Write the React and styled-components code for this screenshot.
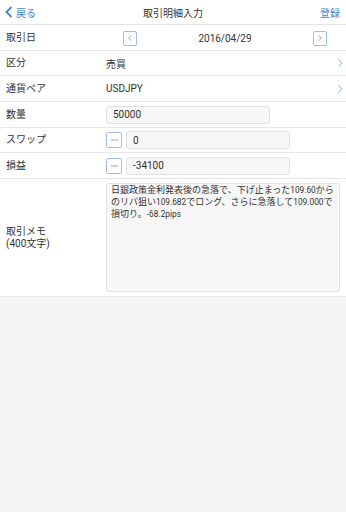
import React from "react";
import styled, { createGlobalStyle } from "styled-components";

const Global = createGlobalStyle`
  html, body { margin: 0; padding: 0; background: #f5f5f5; }
  body { font-family: Roboto, "Noto Sans CJK JP", sans-serif; color: #333; }
  * { box-sizing: border-box; }
`;

const Page = styled.div`
  width: 346px;
  height: 512px;
  background: #f5f5f5;
  font-size: 10px;
`;

const Header = styled.div`
  height: 25px;
  background: #fff;
  border-bottom: 1px solid #e3e3e3;
  display: grid;
  grid-template-columns: 1fr auto 1fr;
  align-items: center;
  padding: 0 6px 0 5px;
`;

const NavLink = styled.div`
  color: #3f86d6;
  font-size: 10px;
  display: flex;
  align-items: center;
  gap: 3px;
  justify-self: ${(p) => (p.$right ? "end" : "start")};
`;

const Title = styled.div`
  font-size: 10px;
  color: #333;
  padding-left: 1px;
`;

const Form = styled.div`
  background: #fff;
`;

const Row = styled.div`
  height: ${(p) => p.$h}px;
  border-bottom: 1px solid #e8e8e8;
  display: grid;
  grid-template-columns: 100px 1fr;
  align-items: center;
  padding-left: 6px;
  position: relative;
`;

const Label = styled.div`
  font-size: 10px;
  color: #333;
  line-height: 12px;
`;

const Value = styled.div`
  font-size: 10px;
  color: #333;
  display: flex;
  align-items: center;
`;

const DateBox = styled.div`
  display: grid;
  grid-template-columns: 14px 1fr 14px;
  align-items: center;
  padding-left: 17px;
  padding-right: 19px;
  margin-top: 1px;
`;

const DateText = styled.div`
  text-align: center;
  font-size: 10px;
  color: #333;
`;

const SmallBtn = styled.div`
  width: ${(p) => p.$w || 14}px;
  height: ${(p) => p.$hh || 15}px;
  border: 1px solid #9dbfee;
  border-radius: 2px;
  display: flex;
  align-items: center;
  justify-content: center;
  background: #fff;
`;

const Chevron = styled.div`
  position: absolute;
  right: 3px;
  top: 50%;
  transform: translateY(-50%);
  display: flex;
`;

const Input = styled.div`
  width: ${(p) => p.$w}px;
  height: 18px;
  background: #f7f7f7;
  border: 1px solid #e2e2e2;
  border-radius: 3px;
  padding-left: 6px;
  font-size: 10px;
  color: #333;
  display: flex;
  align-items: center;
`;

const InputGroup = styled.div`
  display: flex;
  align-items: center;
  gap: 4px;
`;

const MemoRow = styled.div`
  height: 118px;
  border-bottom: 1px solid #e8e8e8;
  display: grid;
  grid-template-columns: 100px 1fr;
  align-items: center;
  padding-left: 6px;
`;

const TextArea = styled.div`
  width: 234px;
  height: 109px;
  background: #f7f7f7;
  border: 1px solid #e2e2e2;
  border-radius: 3px;
  padding: 0 3px 0 4px;
  font-size: 9px;
  line-height: 12px;
  color: #333;
  word-break: break-all;
`;

const Num = styled.span`
  font-size: 8.3px;
`;

const Chev = ({ dir = "right", size = 6, color = "#3f86d6", w = 1.2 }) => (
  <svg width={size} height={size * 1.6} viewBox="0 0 6 10">
    <path
      d={dir === "right" ? "M1 1 L5 5 L1 9" : "M5 1 L1 5 L5 9"}
      fill="none"
      stroke={color}
      strokeWidth={w}
    />
  </svg>
);

const Minus = () => (
  <svg width="7" height="2" viewBox="0 0 7 2">
    <rect x="0" y="0.5" width="7" height="1" fill="#7aaae8" />
  </svg>
);

export default function App() {
  return (
    <Page>
      <Global />
      <Header>
        <NavLink>
          <svg width="8" height="12" viewBox="0 0 8 12">
            <path d="M6.5 1 L1.5 6 L6.5 11" fill="none" stroke="#3f86d6" strokeWidth="1.8" />
          </svg>
          戻る
        </NavLink>
        <Title>取引明細入力</Title>
        <NavLink $right>登録</NavLink>
      </Header>
      <Form>
        <Row $h={26}>
          <Label>取引日</Label>
          <DateBox>
            <SmallBtn>
              <Chev dir="left" size={4} w={1.1} />
            </SmallBtn>
            <DateText>2016/04/29</DateText>
            <SmallBtn>
              <Chev dir="right" size={4} w={1.1} />
            </SmallBtn>
          </DateBox>
        </Row>
        <Row $h={25}>
          <Label>区分</Label>
          <Value>売買</Value>
          <Chevron>
            <Chev size={6} color="#8db4ea" w={1} />
          </Chevron>
        </Row>
        <Row $h={26}>
          <Label>通貨ペア</Label>
          <Value>USDJPY</Value>
          <Chevron>
            <Chev size={6} color="#8db4ea" w={1} />
          </Chevron>
        </Row>
        <Row $h={26}>
          <Label>数量</Label>
          <Value>
            <Input $w={164}>50000</Input>
          </Value>
        </Row>
        <Row $h={25}>
          <Label>スワップ</Label>
          <InputGroup>
            <SmallBtn $w={16} $hh={16}>
              <Minus />
            </SmallBtn>
            <Input $w={164}>0</Input>
          </InputGroup>
        </Row>
        <Row $h={26}>
          <Label>損益</Label>
          <InputGroup>
            <SmallBtn $w={16} $hh={16}>
              <Minus />
            </SmallBtn>
            <Input $w={164}>-34100</Input>
          </InputGroup>
        </Row>
        <MemoRow>
          <Label>
            取引メモ
            <br />
            (400文字)
          </Label>
          <TextArea>
            日銀政策金利発表後の急落で、下げ止まった<Num>109.60</Num>からのリバ狙い<Num>109.682</Num>でロング、さらに急落して<Num>109.000</Num>で損切り。<Num>-68.2pips</Num>
          </TextArea>
        </MemoRow>
      </Form>
    </Page>
  );
}
